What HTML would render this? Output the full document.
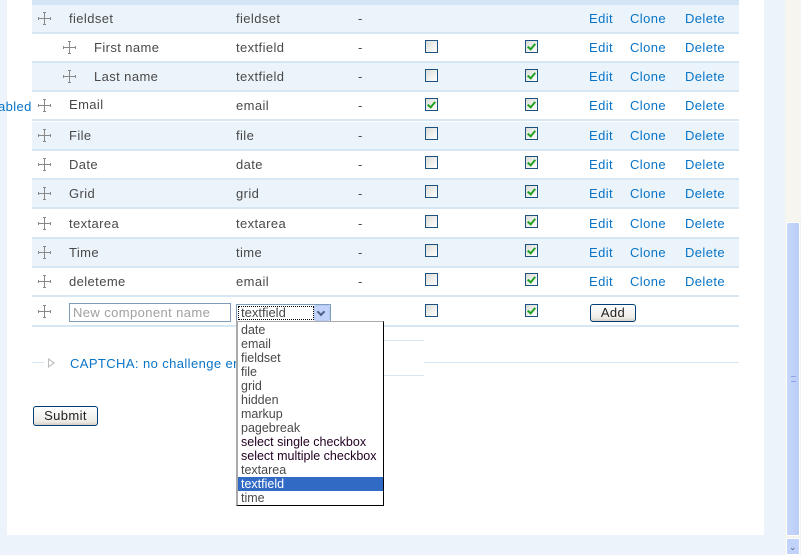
<!DOCTYPE html>
<html><head><meta charset="utf-8"><style>
*{margin:0;padding:0;box-sizing:border-box}
body{width:801px;height:555px;overflow:hidden;background:#edf3fb;font-family:"Liberation Sans",sans-serif;font-size:13px;color:#494949;position:relative;letter-spacing:0.4px}
.a{position:absolute}
#panel{left:7px;top:0;width:757px;height:535px;background:#fff}
.row{position:absolute;left:32px;width:707px;height:29px;border-bottom:2px solid #d7e6f3}
.odd{background:#ecf4fb}
.t{position:absolute;top:6px;white-space:nowrap}
.lnk{color:#0874c7}
.mv{position:absolute;top:7px;width:13px;height:13px}
.mv:before{content:"";position:absolute;left:6px;top:1px;width:1px;height:11px;background:#888}
.mv:after{content:"";position:absolute;left:1px;top:6px;width:11px;height:1px;background:#888}
.mv i{position:absolute;left:5px;top:0;width:3px;height:13px;border-top:1px solid #888;border-bottom:1px solid #888}
.mv b{position:absolute;left:0;top:5px;width:13px;height:3px;border-left:1px solid #888;border-right:1px solid #888}
.cb{position:absolute;top:6px;width:13px;height:13px;border:1px solid #1c5180;background:linear-gradient(135deg,#dcdcd6,#fff)}
.ck:after{content:"";position:absolute;left:3px;top:1px;width:3px;height:6px;border-right:2px solid #21a121;border-bottom:2px solid #21a121;transform:rotate(40deg)}
.btn{position:absolute;border:1px solid #003c74;border-radius:3px;background:linear-gradient(#fff,#ecebe6 80%,#d6d0c5);font-size:13px;color:#222;text-align:center}
.dl{letter-spacing:0}
.dl div{padding-left:3px;white-space:nowrap;height:14px}
</style></head><body>
<div class="a" style="left:785px;top:0;width:16px;height:221px;background:#f6f5ef"></div>
<div class="a" style="left:785px;top:221px;width:16px;height:334px;background:#f3f3ee"></div>
<div class="a" style="left:786px;top:222px;width:14px;height:314px;background:linear-gradient(90deg,#c8d6fb,#b9cdf8);border:1px solid #fff;border-radius:2px"></div>
<div class="a" style="left:791px;top:376px;width:5px;height:6px;border-top:1px solid #8aa6e8;border-bottom:1px solid #8aa6e8"></div>
<div class="a" style="left:786px;top:538px;width:14px;height:17px;background:#c1d3fb;border:1px solid #fff;color:#4d6185;font-size:9px;text-align:center;line-height:16px">⌄</div>
<div class="a" id="panel"></div>
<div class="a" style="left:32px;top:0;width:707px;height:5px;background:#d4e5f5"></div>

<div class="row odd" style="top:5px"><span class="mv" style="left:6px"><i></i><b></b></span><span class="t" style="left:37px">fieldset</span><span class="t" style="left:204px">fieldset</span><span class="t" style="left:326px">-</span><span class="t lnk" style="left:557px">Edit</span><span class="t lnk" style="left:598px">Clone</span><span class="t lnk" style="left:653px">Delete</span></div>
<div class="row" style="top:34px"><span class="mv" style="left:31px"><i></i><b></b></span><span class="t" style="left:62px">First name</span><span class="t" style="left:204px">textfield</span><span class="t" style="left:326px">-</span><span class="cb" style="left:393px"></span><span class="cb ck" style="left:493px"></span><span class="t lnk" style="left:557px">Edit</span><span class="t lnk" style="left:598px">Clone</span><span class="t lnk" style="left:653px">Delete</span></div>
<div class="row odd" style="top:63px"><span class="mv" style="left:31px"><i></i><b></b></span><span class="t" style="left:62px">Last name</span><span class="t" style="left:204px">textfield</span><span class="t" style="left:326px">-</span><span class="cb" style="left:393px"></span><span class="cb ck" style="left:493px"></span><span class="t lnk" style="left:557px">Edit</span><span class="t lnk" style="left:598px">Clone</span><span class="t lnk" style="left:653px">Delete</span></div>
<div class="row" style="top:92px"><span class="mv" style="left:6px"><i></i><b></b></span><span class="t" style="left:37px;top:5px">Email</span><span class="t" style="left:204px">email</span><span class="t" style="left:326px">-</span><span class="cb ck" style="left:393px"></span><span class="cb ck" style="left:493px"></span><span class="t lnk" style="left:557px">Edit</span><span class="t lnk" style="left:598px">Clone</span><span class="t lnk" style="left:653px">Delete</span></div>
<div class="row odd" style="top:122px"><span class="mv" style="left:6px"><i></i><b></b></span><span class="t" style="left:37px">File</span><span class="t" style="left:204px">file</span><span class="t" style="left:326px">-</span><span class="cb" style="left:393px;top:5px"></span><span class="cb ck" style="left:493px;top:5px"></span><span class="t lnk" style="left:557px">Edit</span><span class="t lnk" style="left:598px">Clone</span><span class="t lnk" style="left:653px">Delete</span></div>
<div class="row" style="top:151px"><span class="mv" style="left:6px"><i></i><b></b></span><span class="t" style="left:37px">Date</span><span class="t" style="left:204px">date</span><span class="t" style="left:326px">-</span><span class="cb" style="left:393px;top:5px"></span><span class="cb ck" style="left:493px;top:5px"></span><span class="t lnk" style="left:557px">Edit</span><span class="t lnk" style="left:598px">Clone</span><span class="t lnk" style="left:653px">Delete</span></div>
<div class="row odd" style="top:180px"><span class="mv" style="left:6px"><i></i><b></b></span><span class="t" style="left:37px">Grid</span><span class="t" style="left:204px">grid</span><span class="t" style="left:326px">-</span><span class="cb" style="left:393px;top:5px"></span><span class="cb ck" style="left:493px;top:5px"></span><span class="t lnk" style="left:557px">Edit</span><span class="t lnk" style="left:598px">Clone</span><span class="t lnk" style="left:653px">Delete</span></div>
<div class="row" style="top:210px"><span class="mv" style="left:6px"><i></i><b></b></span><span class="t" style="left:37px">textarea</span><span class="t" style="left:204px">textarea</span><span class="t" style="left:326px">-</span><span class="cb" style="left:393px;top:5px"></span><span class="cb ck" style="left:493px;top:5px"></span><span class="t lnk" style="left:557px">Edit</span><span class="t lnk" style="left:598px">Clone</span><span class="t lnk" style="left:653px">Delete</span></div>
<div class="row odd" style="top:239px"><span class="mv" style="left:6px"><i></i><b></b></span><span class="t" style="left:37px">Time</span><span class="t" style="left:204px">time</span><span class="t" style="left:326px">-</span><span class="cb" style="left:393px;top:5px"></span><span class="cb ck" style="left:493px;top:5px"></span><span class="t lnk" style="left:557px">Edit</span><span class="t lnk" style="left:598px">Clone</span><span class="t lnk" style="left:653px">Delete</span></div>
<div class="row" style="top:268px"><span class="mv" style="left:6px"><i></i><b></b></span><span class="t" style="left:37px">deleteme</span><span class="t" style="left:204px">email</span><span class="t" style="left:326px">-</span><span class="cb" style="left:393px;top:5px"></span><span class="cb ck" style="left:493px;top:5px"></span><span class="t lnk" style="left:557px">Edit</span><span class="t lnk" style="left:598px">Clone</span><span class="t lnk" style="left:653px">Delete</span></div>
<div class="row" style="top:298px"><span class="mv" style="left:6px"><i></i><b></b></span>
<div class="a" style="left:37px;top:5px;width:162px;height:19px;border:1px solid #7f9db9;color:#a0a0a0;padding:1px 3px;white-space:nowrap;overflow:hidden">New component name</div>
<span class="cb" style="left:393px;top:6px"></span><span class="cb ck" style="left:493px;top:6px"></span>
<div class="btn" style="left:558px;top:6px;width:46px;height:18px;line-height:16px">Add</div>
</div>

<span class="a lnk" style="left:-2px;top:99px">abled</span>

<div class="a" style="left:384px;top:340px;width:40px;height:1px;background:#d7e6f3"></div>
<div class="a" style="left:424px;top:362px;width:315px;height:1px;background:#d7e6f3"></div>
<div class="a" style="left:32px;top:362px;width:12px;height:1px;background:#d7e6f3"></div>
<div class="a" style="left:48px;top:358px;width:0;height:0;border-left:7px solid #bbb;border-top:5px solid transparent;border-bottom:5px solid transparent"></div>
<div class="a" style="left:49px;top:360px;width:0;height:0;border-left:4px solid #fff;border-top:3px solid transparent;border-bottom:3px solid transparent"></div>
<div class="a" style="left:384px;top:375px;width:40px;height:1px;background:#d7e6f3"></div>
<span class="a lnk" style="left:70px;top:356px;white-space:nowrap">CAPTCHA: no challenge en</span>
<div class="btn" style="left:33px;top:406px;width:65px;height:20px;line-height:18px">Submit</div>

<div class="a" style="left:236px;top:304px;width:95px;height:18px;border:1px solid #7f9db9;background:#fff"></div>
<div class="a" style="left:238px;top:306px;width:76px;height:14px;border:1px dotted #000;line-height:12px;padding-left:2px;letter-spacing:0">textfield</div>
<div class="a" style="left:314px;top:305px;width:16px;height:16px;background:#c1d3fb;border:1px solid #b6c9f3;border-radius:2px"></div>
<div class="a" style="left:318px;top:309px;width:6px;height:6px;border-right:2px solid #4d6185;border-bottom:2px solid #4d6185;transform:rotate(45deg)"></div>
<div class="a" style="left:347px;top:321px;width:8px;height:2px;background:#aab"></div>
<div class="a dl" style="left:236px;top:321px;width:148px;height:185px;background:#fff;border:1px solid #000;border-left:2px solid #aaa;border-top:1px solid #aaa;line-height:14px;padding-top:1px;font-size:12.5px;overflow:hidden">
<div>date</div><div>email</div><div>fieldset</div><div>file</div><div>grid</div><div>hidden</div><div>markup</div><div>pagebreak</div><div style="color:#202">select single checkbox</div><div style="color:#202">select multiple checkbox</div><div>textarea</div><div style="background:#316ac5;color:#fff">textfield</div><div>time</div>
</div>
</body></html>
